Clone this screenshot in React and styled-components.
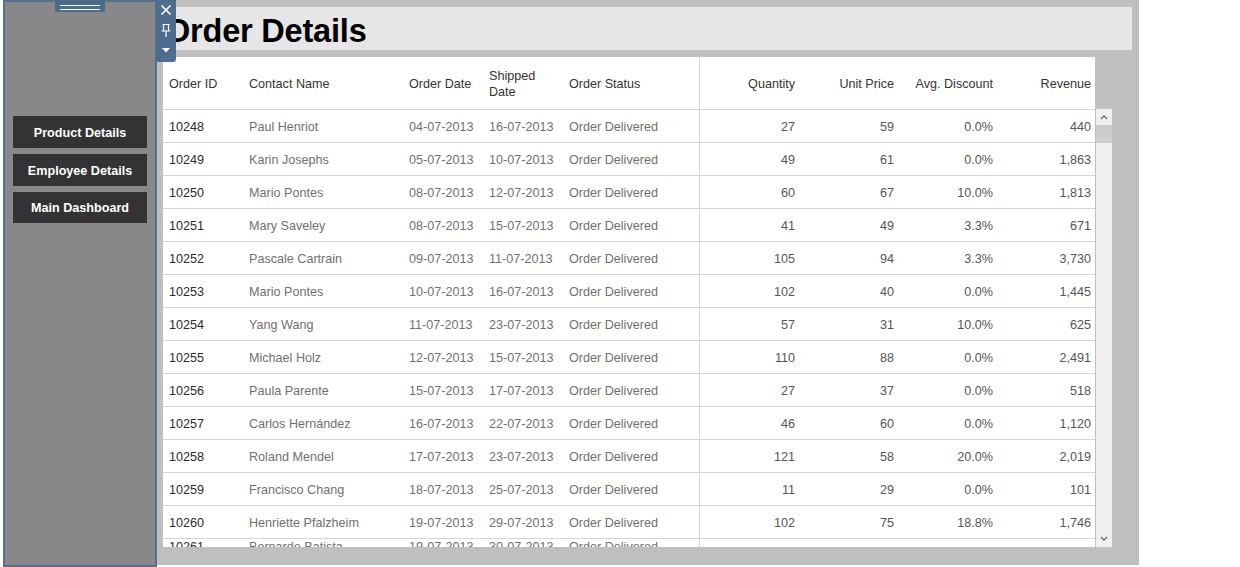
import React from "react";
import styled, { createGlobalStyle } from "styled-components";

const Global = createGlobalStyle`
  html, body { margin: 0; padding: 0; background: #ffffff; }
  body { font-family: "Liberation Sans", Arial, sans-serif; }
  * { box-sizing: border-box; }
`;

const Page = styled.div`
  position: relative;
  width: 1240px;
  height: 567px;
  display: flex;
  align-items: flex-start;
  padding-left: 3px;
  overflow: hidden;
`;

const Sidebar = styled.aside`
  position: relative;
  width: 154px;
  height: 567px;
  background: #888888;
  border: 2px solid #52708f;
  padding: 114px 0 0 8px;
  display: flex;
  flex-direction: column;
  gap: 6px;
`;

const Handle = styled.div`
  position: absolute;
  top: -2px;
  left: 50px;
  width: 50px;
  height: 12px;
  background: #4b6b8d;
  border-radius: 0 0 2px 2px;
  display: flex;
  flex-direction: column;
  align-items: center;
  padding-top: 5px;
  gap: 3px;
`;

const HandleLine = styled.span`
  display: block;
  width: 40px;
  height: 1px;
  background: #ffffff;
`;

const NavButton = styled.button`
  width: 134px;
  height: ${(p) => p.$h}px;
  border: none;
  background: #333333;
  color: #ffffff;
  font-family: "Liberation Sans", Arial, sans-serif;
  font-weight: 700;
  font-size: 12.6px;
  padding: 1px 0 0;
  cursor: pointer;
`;

const Main = styled.main`
  width: 982px;
  height: 565px;
  background: #bfbfbf;
  padding: 7px 0 0 6px;
  display: flex;
  flex-direction: column;
  gap: 7px;
`;

const TitleBar = styled.div`
  margin-left: 2px;
  width: 967px;
  height: 43px;
  background: #e6e6e6;
  padding: 4px 0 0 0;
`;

const Title = styled.h1`
  margin: 0;
  font-family: "Liberation Sans", Arial, sans-serif;
  font-weight: 700;
  font-size: 32.5px;
  line-height: 40px;
  color: #000000;
  letter-spacing: -0.2px;
`;

const Body = styled.div`
  display: flex;
  align-items: flex-start;
`;

const Table = styled.div`
  width: 932px;
  height: 490px;
  background: #ffffff;
  display: flex;
  flex-direction: column;
  overflow: hidden;
`;

const COLS = "80px 160px 80px 80px 136px 100px 99px 99px 98px";

const HeaderRow = styled.div`
  display: grid;
  grid-template-columns: ${COLS};
  height: 53px;
  flex: none;
  border-bottom: 1px solid #d6d6d6;
`;

const RowsViewport = styled.div`
  flex: 1;
  overflow: hidden;
`;

const Row = styled.div`
  display: grid;
  grid-template-columns: ${COLS};
  height: 33px;
  border-bottom: 1px solid #d6d6d6;
`;

const HeadCell = styled.div`
  display: flex;
  align-items: center;
  justify-content: ${(p) => (p.$num ? "flex-end" : "flex-start")};
  padding: ${(p) => (p.$num ? "2px 4px 0 0" : "2px 0 0 6px")};
  font-size: 12.6px;
  line-height: 16px;
  color: #333333;
  border-left: ${(p) => (p.$divider ? "1px solid #d6d6d6" : "none")};
`;

const Cell = styled.div`
  display: flex;
  align-items: ${(p) => (p.$partial ? "flex-start" : "center")};
  justify-content: ${(p) => (p.$num ? "flex-end" : "flex-start")};
  padding: ${(p) => (p.$num ? "1px 4px 0 0" : "1px 0 0 6px")};
  padding-top: ${(p) => (p.$partial ? "1px" : "1px")};
  font-size: 12.6px;
  white-space: nowrap;
  color: ${(p) => (p.$strong ? "#2b2b2b" : p.$num ? "#555555" : "#707070")};
  border-left: ${(p) => (p.$divider ? "1px solid #d6d6d6" : "none")};
`;

const Scrollbar = styled.div`
  margin: 52px 0 0 1px;
  width: 16px;
  height: 438px;
  background: #efefef;
  display: flex;
  flex-direction: column;
  align-items: stretch;
`;

const ScrollArrow = styled.div`
  height: 16px;
  display: flex;
  align-items: center;
  justify-content: center;
  flex: none;
`;

const ScrollThumb = styled.div`
  height: 18px;
  background: #cdcdcd;
  flex: none;
`;

const ScrollTrack = styled.div`
  flex: 1;
`;

const Toolbar = styled.div`
  position: absolute;
  top: 0;
  left: 156px;
  width: 20px;
  height: 62px;
  background: #4e6d8e;
  border-radius: 0 0 3px 3px;
  display: flex;
  flex-direction: column;
  align-items: center;
  padding-top: 1px;
`;

const ToolIcon = styled.div`
  height: ${(p) => p.$h}px;
  display: flex;
  align-items: center;
  justify-content: center;
`;

const rows = [
  ["10248", "Paul Henriot", "04-07-2013", "16-07-2013", "27", "59", "0.0%", "440"],
  ["10249", "Karin Josephs", "05-07-2013", "10-07-2013", "49", "61", "0.0%", "1,863"],
  ["10250", "Mario Pontes", "08-07-2013", "12-07-2013", "60", "67", "10.0%", "1,813"],
  ["10251", "Mary Saveley", "08-07-2013", "15-07-2013", "41", "49", "3.3%", "671"],
  ["10252", "Pascale Cartrain", "09-07-2013", "11-07-2013", "105", "94", "3.3%", "3,730"],
  ["10253", "Mario Pontes", "10-07-2013", "16-07-2013", "102", "40", "0.0%", "1,445"],
  ["10254", "Yang Wang", "11-07-2013", "23-07-2013", "57", "31", "10.0%", "625"],
  ["10255", "Michael Holz", "12-07-2013", "15-07-2013", "110", "88", "0.0%", "2,491"],
  ["10256", "Paula Parente", "15-07-2013", "17-07-2013", "27", "37", "0.0%", "518"],
  ["10257", "Carlos Hernández", "16-07-2013", "22-07-2013", "46", "60", "0.0%", "1,120"],
  ["10258", "Roland Mendel", "17-07-2013", "23-07-2013", "121", "58", "20.0%", "2,019"],
  ["10259", "Francisco Chang", "18-07-2013", "25-07-2013", "11", "29", "0.0%", "101"],
  ["10260", "Henriette Pfalzheim", "19-07-2013", "29-07-2013", "102", "75", "18.8%", "1,746"],
  ["10261", "Bernardo Batista", "19-07-2013", "30-07-2013", "", "", "", ""],
];

const Chevron = ({ up }) => (
  <svg width="8" height="6" viewBox="0 0 8 6">
    <path
      d={up ? "M1 5 L4 2 L7 5" : "M1 1 L4 4 L7 1"}
      fill="none"
      stroke="#6a6a6a"
      strokeWidth="1.4"
    />
  </svg>
);

export default function App() {
  return (
    <>
      <Global />
      <Page>
        <Sidebar>
          <Handle>
            <HandleLine />
            <HandleLine />
          </Handle>
          <NavButton $h={32}>Product Details</NavButton>
          <NavButton $h={32}>Employee Details</NavButton>
          <NavButton $h={31}>Main Dashboard</NavButton>
        </Sidebar>
        <Main>
          <TitleBar>
            <Title>Order Details</Title>
          </TitleBar>
          <Body>
            <Table>
              <HeaderRow>
                <HeadCell>Order ID</HeadCell>
                <HeadCell>Contact Name</HeadCell>
                <HeadCell>Order Date</HeadCell>
                <HeadCell>
                  Shipped
                  <br />
                  Date
                </HeadCell>
                <HeadCell>Order Status</HeadCell>
                <HeadCell $num $divider>Quantity</HeadCell>
                <HeadCell $num>Unit Price</HeadCell>
                <HeadCell $num>Avg. Discount</HeadCell>
                <HeadCell $num>Revenue</HeadCell>
              </HeaderRow>
              <RowsViewport>
                {rows.map((r, i) => {
                  const partial = i === rows.length - 1;
                  return (
                    <Row key={r[0]}>
                      <Cell $strong $partial={partial}>{r[0]}</Cell>
                      <Cell $partial={partial}>{r[1]}</Cell>
                      <Cell $partial={partial}>{r[2]}</Cell>
                      <Cell $partial={partial}>{r[3]}</Cell>
                      <Cell $partial={partial}>Order Delivered</Cell>
                      <Cell $num $divider>{r[4]}</Cell>
                      <Cell $num>{r[5]}</Cell>
                      <Cell $num>{r[6]}</Cell>
                      <Cell $num>{r[7]}</Cell>
                    </Row>
                  );
                })}
              </RowsViewport>
            </Table>
            <Scrollbar>
              <ScrollArrow>
                <Chevron up />
              </ScrollArrow>
              <ScrollThumb />
              <ScrollTrack />
              <ScrollArrow>
                <Chevron />
              </ScrollArrow>
            </Scrollbar>
          </Body>
        </Main>
        <Toolbar>
          <ToolIcon $h={17}>
            <svg width="12" height="12" viewBox="0 0 12 12">
              <path d="M1.5 1.5 L10.5 10.5 M10.5 1.5 L1.5 10.5" stroke="#ffffff" strokeWidth="1.6" />
            </svg>
          </ToolIcon>
          <ToolIcon $h={24}>
            <svg width="12" height="15" viewBox="0 0 12 15">
              <path
                d="M2.5 1.5 H9.5 M3.5 1.5 V7.5 M8.5 1.5 V7.5 M1.5 8 H10.5 M6 8 V14"
                stroke="#ffffff"
                strokeWidth="1.2"
                fill="none"
              />
            </svg>
          </ToolIcon>
          <ToolIcon $h={16}>
            <svg width="8" height="5" viewBox="0 0 8 5">
              <path d="M0 0 H8 L4 4.5 Z" fill="#ffffff" />
            </svg>
          </ToolIcon>
        </Toolbar>
      </Page>
    </>
  );
}
